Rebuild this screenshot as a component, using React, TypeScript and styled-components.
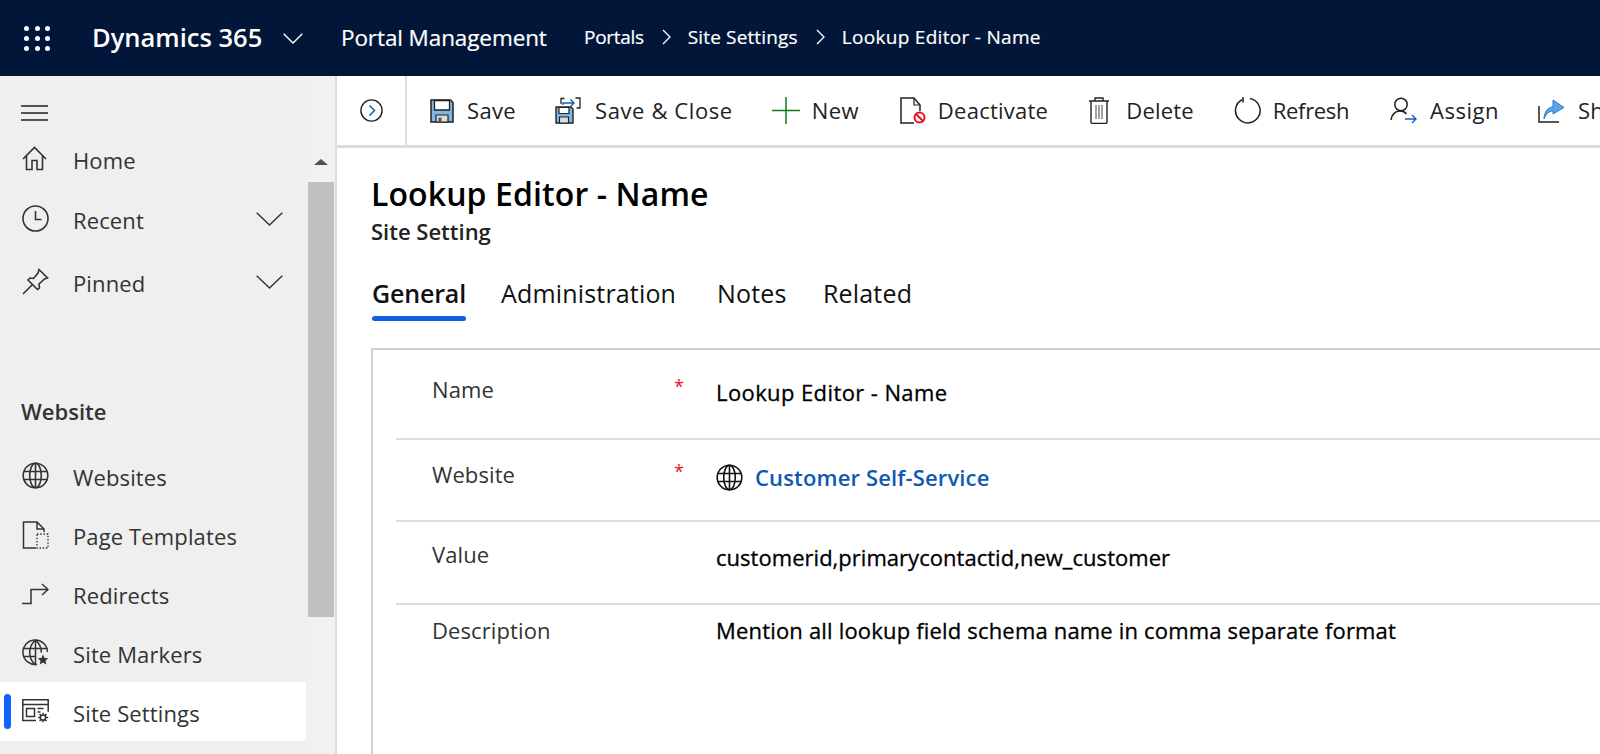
import React from "react";
import styled, { createGlobalStyle } from "styled-components";

const Global = createGlobalStyle`
  html, body { margin: 0; padding: 0; height: 100%; overflow: hidden; background: #fff; }
  body { font-family: "Open Sans", "Noto Sans", "Liberation Sans", sans-serif; color: #111; }
  * { box-sizing: border-box; }
`;

const Page = styled.div`
  width: 1600px;
  height: 754px;
  display: flex;
  flex-direction: column;
  overflow: hidden;
`;

const TopBar = styled.header`
  flex: 0 0 76px;
  background: #011638;
  color: #fff;
  display: flex;
  align-items: center;
  padding-left: 24px;
  white-space: nowrap;
`;
const Waffle = styled.div`
  width: 26px;
  height: 25px;
  display: grid;
  grid-template-columns: repeat(3, 5px);
  grid-template-rows: repeat(3, 5px);
  justify-content: space-between;
  align-content: space-between;
  margin-right: 42px;
`;
const Dot = styled.span`
  width: 5px;
  height: 5px;
  border-radius: 50%;
  background: #fff;
`;
const Brand = styled.span`
  font-size: 25.5px;
  font-weight: 600;
  width: 191px;
  margin-top: -2px;
`;
const App_ = styled.span`
  font-size: 22.5px;
  letter-spacing: -0.1px;
  -webkit-text-stroke: 0.2px #fff;
  width: 243px;
  margin-left: 38px;
  margin-top: -2px;
`;
const Crumb = styled.span<{ $ls?: number }>`
  font-size: 19px;
  letter-spacing: ${(p) => p.$ls ?? 0.15}px;
  -webkit-text-stroke: 0.2px #fff;
  margin-top: -3px;
`;
const CrumbSep = styled.span`
  display: inline-flex;
  width: 44px;
  justify-content: flex-start;
  padding-left: 18px;
  margin-top: -3px;
`;

const Body = styled.div`
  flex: 1;
  display: flex;
  min-height: 0;
`;
const Side = styled.aside`
  flex: 0 0 337px;
  background: #f0f0f0;
  border-right: 2px solid #dcdcdc;
  display: flex;
`;
const Nav = styled.nav`
  flex: 0 0 306px;
  background: #efefef;
  display: flex;
  flex-direction: column;
`;
const Hamburger = styled.div`
  flex: 0 0 53px;
  padding: 28px 0 0 21px;
`;
const NavRow = styled.div<{ $h?: number; $active?: boolean }>`
  position: relative;
  flex: 0 0 ${(p) => p.$h ?? 59}px;
  display: flex;
  align-items: center;
  background: ${(p) => (p.$active ? "#fff" : "transparent")};
  color: #333;
`;
const NavIcon = styled.span`
  flex: 0 0 73px;
  display: flex;
  padding-left: 22px;
`;
const NavLabel = styled.span`
  flex: 1;
  font-size: 22px;
  letter-spacing: 0.13px;
  padding-top: 3px;
`;
const NavChevron = styled.span`
  flex: 0 0 50px;
  display: flex;
  padding-top: 2px;
`;
const Marker = styled.span`
  position: absolute;
  left: 4px;
  top: 12px;
  width: 7px;
  height: 35px;
  border-radius: 4px;
  background: #0f62fe;
`;
const GroupTitle = styled.div`
  flex: 0 0 132px;
  display: flex;
  align-items: flex-end;
  padding: 0 0 20px 21px;
  font-size: 22px;
  font-weight: 600;
  color: #333;
`;
const Scroll = styled.div`
  flex: 0 0 26px;
  margin-left: 2px;
  display: flex;
  flex-direction: column;
  background: #f1f1f1;
  padding-top: 70px;
`;
const ScrollUp = styled.div`
  flex: 0 0 36px;
  display: flex;
  align-items: center;
  justify-content: center;
  padding-bottom: 4px;
`;
const Caret = styled.span`
  width: 0;
  height: 0;
  border-left: 7px solid transparent;
  border-right: 7px solid transparent;
  border-bottom: 6px solid #505050;
`;
const Thumb = styled.div`
  flex: 0 0 435px;
  background: #c1c1c1;
`;

const Main = styled.main`
  flex: 1;
  min-width: 0;
  display: flex;
  flex-direction: column;
  overflow: hidden;
`;
const Toolbar = styled.div`
  flex: 0 0 72px;
  display: flex;
  border-bottom: 3px solid #dcdcdc;
  white-space: nowrap;
  overflow: hidden;
`;
const Toggle = styled.div`
  flex: 0 0 70px;
  display: flex;
  align-items: center;
  justify-content: center;
  border-right: 2px solid #dcdcdc;
`;
const Commands = styled.div`
  display: flex;
  align-items: center;
  gap: 40px;
  padding-left: 23px;
`;
const Command = styled.div<{ $gap: number; $ml: number }>`
  display: flex;
  align-items: center;
  gap: ${(p) => p.$gap}px;
  margin-left: ${(p) => p.$ml}px;
  flex: none;
`;
const CommandLabel = styled.span<{ $ls: number }>`
  font-size: 22px;
  letter-spacing: ${(p) => p.$ls}px;
  color: #222;
  margin-top: -1px;
`;

const Head = styled.div`
  padding: 25px 0 0 34px;
`;
const Title = styled.h1`
  margin: 0 0 1px;
  font-size: 32px;
  line-height: 42px;
  font-weight: 600;
  letter-spacing: 0.1px;
  color: #000;
`;
const Sub = styled.div`
  font-size: 22px;
  line-height: 30px;
  font-weight: 600;
  color: #222;
`;
const Tabs = styled.div`
  display: flex;
  margin: 29px 0 0 1px;
  height: 73px;
`;
const Tab = styled.div<{ $w: number; $active?: boolean }>`
  flex: 0 0 ${(p) => p.$w}px;
  font-size: 25px;
  line-height: 36px;
  font-weight: ${(p) => (p.$active ? 600 : 400)};
  letter-spacing: ${(p) => (p.$active ? "-0.15px" : "0.17px")};
  color: #111;
  position: relative;
`;
const TabBar = styled.span`
  position: absolute;
  left: 0;
  top: 41px;
  width: 94px;
  height: 5px;
  border-radius: 3px;
  background: #1160e0;
`;
const Card = styled.section`
  margin: 0 0 0 34px;
  flex: 1;
  border: 2px solid #cfcfcf;
  border-right: 0;
  border-bottom: 0;
  padding-left: 23px;
`;
const FieldRow = styled.div<{ $h: number; $top: number; $last?: boolean }>`
  height: ${(p) => p.$h}px;
  padding: ${(p) => p.$top}px 0 0 36px;
  display: grid;
  grid-template-columns: 244px 40px 1fr;
  align-items: start;
  border-bottom: ${(p) => (p.$last ? "0" : "2px solid #dcdcdc")};
`;
const FieldLabel = styled.div`
  font-size: 22px;
  line-height: 30px;
  letter-spacing: 0.1px;
  color: #333;
`;
const Star = styled.div`
  font-size: 18px;
  line-height: 24px;
  margin-left: -2px;
  color: #e81123;
`;
const FieldValue = styled.div<{ $off: number; $ls: number }>`
  margin-top: ${(p) => p.$off}px;
  font-size: 22px;
  line-height: 30px;
  letter-spacing: ${(p) => p.$ls}px;
  -webkit-text-stroke: 0.3px #000;
  color: #000;
  white-space: nowrap;
  display: flex;
  align-items: center;
`;
const LookupLink = styled.span`
  margin-left: 12px;
  font-weight: 600;
  letter-spacing: 0.15px;
  -webkit-text-stroke: 0;
  color: #1158b0;
`;

const Chevron = ({ w, h, c }: { w: number; h: number; c: string }) => (
  <svg width={w} height={h} viewBox={`0 0 ${w} ${h}`} fill="none" stroke={c} strokeWidth="1.4">
    <path d={`M0.7 0.7 L${w / 2} ${h - 1} L${w - 0.7} 0.7`} />
  </svg>
);
const Sep = () => (
  <svg width="9" height="16" viewBox="0 0 9 16" fill="none" stroke="#fff" strokeWidth="1.3">
    <path d="M1 1l7 7-7 7" />
  </svg>
);

const S = { fill: "none", stroke: "#333", strokeWidth: 1.6 };

const HomeIcon = () => (
  <svg width="25" height="25" viewBox="0 0 25 25" {...S}>
    <path d="M1 13 12.500 1.500 24 13M4.500 10v13.500h5.500v-9h5v9h5.500V10" />
  </svg>
);
const ClockIcon = () => (
  <svg width="27" height="27" viewBox="0 0 27 27" {...S}>
    <circle cx="13.5" cy="13.5" r="12.5" />
    <path d="M13.5 6v8.500h6" />
  </svg>
);
const PinIcon = () => (
  <svg width="27" height="27" viewBox="0 0 27 27" {...S}>
    <path d="M17 1.500 25.500 10l-3 1-5.500 5 .5 4-2 1.500L6 12l2-2 3.500.5L16 5z" />
    <path d="M10.500 16.500 1 26" />
  </svg>
);
const GlobeIcon = ({ c = "#333", size = 27 }: { c?: string; size?: number }) => (
  <svg width={size} height={size} viewBox="0 0 27 27" fill="none" stroke={c} strokeWidth="1.6">
    <circle cx="13.5" cy="13.5" r="12.3" />
    <ellipse cx="13.5" cy="13.5" rx="5.8" ry="12.3" />
    <path d="M13.5 1.200v24.600M1.600 9.500h23.800M1.600 17.500h23.800" />
  </svg>
);
const TemplateIcon = () => (
  <svg width="27" height="28" viewBox="0 0 27 28" fill="none" stroke="#333" strokeWidth="1.5">
    <path d="M14 27H1.500V1H15l7 7v3" />
    <path d="M15 1v7h7" />
    <path d="M15 13h11v14H15z" strokeDasharray="1.5 1.7" strokeWidth="1.3" />
  </svg>
);
const RedirectIcon = () => (
  <svg width="27" height="22" viewBox="0 0 27 22" fill="none" stroke="#333" strokeWidth="1.5">
    <path d="M0 20.500h9V6.500h16.500M20 1l6 5.500-6 5.500" />
  </svg>
);
const MarkerIcon = () => (
  <svg width="27" height="27" viewBox="0 0 27 27" fill="none" stroke="#333" strokeWidth="1.5">
    <path d="M15 25.400A12.300 12.300 0 1 1 25.500 13" />
    <path d="M13.500 1.200C10 4 7.700 8.500 7.700 13.500s2.300 9.500 5.800 12.300M13.500 1.200c3.500 2.800 5.800 7.300 5.800 12.300M13.500 1.200v24M1.600 9.500h23.800M1.600 17.500h12" />
    <path d="M21 15.500l1.600 3.400 3.700.4-2.800 2.500.8 3.700-3.300-1.900-3.300 1.900.8-3.700-2.800-2.500 3.700-.4z" fill="#333" stroke="none" />
  </svg>
);
const SettingsIcon = () => (
  <svg width="27" height="25" viewBox="0 0 27 25" fill="none" stroke="#333" strokeWidth="1.5">
    <path d="M14 21.500H.8V.8h25.400v12" />
    <path d="M.8 5.500h25.400" />
    <path d="M4.500 9.500h8v8h-8zM15.500 9.500h6M15.500 13h3" />
    <circle cx="21" cy="18.5" r="2.6" />
    <path d="M21 13.800v2M21 21v2.200M16.200 18.500h2.200M23.600 18.500h2.600M17.600 15.100l1.600 1.600M22.900 20.400l1.600 1.600M17.600 21.900l1.600-1.600M22.900 16.600l1.600-1.600" />
  </svg>
);

const ToggleIcon = () => (
  <svg width="23" height="23" viewBox="0 0 23 23" fill="none">
    <circle cx="11.5" cy="11.5" r="10.6" stroke="#222" strokeWidth="1.4" />
    <path d="M9.500 6.500l5 5-5 5" stroke="#1160b7" strokeWidth="1.5" />
  </svg>
);
const SaveIcon = () => (
  <svg width="24" height="24" viewBox="0 0 24 24" fill="none">
    <path d="M1 1h19.500L23 3.500V23H1z" fill="#7db7e8" stroke="#222" strokeWidth="1.5" />
    <path d="M4.500 1.500h15v9.500h-15z" fill="#fff" stroke="#222" strokeWidth="1.3" />
    <path d="M6 16h12v7H6z" fill="#dcdcdc" stroke="#222" strokeWidth="1.2" />
    <path d="M8.500 18.500h3v4.500h-3z" fill="#555" />
  </svg>
);
const SaveCloseIcon = () => (
  <svg width="26" height="27" viewBox="0 0 26 27" fill="none">
    <path d="M1 10h15l2 2v14H1z" fill="#7db7e8" stroke="#222" strokeWidth="1.4" />
    <path d="M4 10.500h10v6H4z" fill="#fff" stroke="#222" strokeWidth="1.2" />
    <path d="M4.500 20h9v6h-9z" fill="#dcdcdc" stroke="#222" strokeWidth="1.1" />
    <path d="M6 7V1.500h3.500M20.500 1H25v10h-3.500" stroke="#222" strokeWidth="1.3" />
    <path d="M8 8V6h11M15.500 2.500 19 6l-3.500 3.500" stroke="#1160b7" strokeWidth="1.4" />
  </svg>
);
const PlusIcon = () => (
  <svg width="28" height="27" viewBox="0 0 28 27" fill="none" stroke="#107c10" strokeWidth="1.5">
    <path d="M0 13.500h28M14 0v27" />
  </svg>
);
const DeactivateIcon = () => (
  <svg width="26" height="27" viewBox="0 0 26 27" fill="none">
    <path d="M14 26H1V1h13l6 7v6" stroke="#222" strokeWidth="1.5" />
    <path d="M14 1v7h6" stroke="#222" strokeWidth="1.2" />
    <circle cx="19.5" cy="20.5" r="5" stroke="#e81123" strokeWidth="2" />
    <path d="M16 17l7 7" stroke="#e81123" strokeWidth="2" />
  </svg>
);
const DeleteIcon = () => (
  <svg width="22" height="27" viewBox="0 0 22 27" fill="none" stroke="#222" strokeWidth="1.4">
    <path d="M1 4h20M7 4V1h8v3M3 4v21a1.500 1.500 0 0 0 1.500 1.500h13A1.500 1.500 0 0 0 19 25V4" />
    <path d="M8 8v14M11 8v14M14 8v14" strokeWidth="1.1" stroke="#555" />
  </svg>
);
const RefreshIcon = () => (
  <svg width="28" height="27" viewBox="0 0 28 27" fill="none" stroke="#222" strokeWidth="1.5">
    <path d="M17 1.500A12.300 12.300 0 1 1 9.500 2.500" />
    <path d="M10 0v5.500" />
  </svg>
);
const AssignIcon = () => (
  <svg width="27" height="27" viewBox="0 0 27 27" fill="none">
    <circle cx="11" cy="7.500" r="6.200" stroke="#222" strokeWidth="1.5" />
    <path d="M1 23c.5-5 4-9 9-9 3 0 5 1 6.500 3" stroke="#222" strokeWidth="1.5" />
    <path d="M15 22h11M22 18l4 4-4 4" stroke="#1160b7" strokeWidth="1.4" />
  </svg>
);
const ShareIcon = () => (
  <svg width="27" height="24" viewBox="0 0 27 24" fill="none">
    <path d="M1 7v16h20" stroke="#222" strokeWidth="1.5" />
    <path d="M6 20C6 13 10 8 15 8V1l11 7.500L15 15v-3c-4 0-7 3-9 8z" fill="#5aa5e6" stroke="#2b7cc0" strokeWidth="1" />
  </svg>
);

const commands = [
  { label: "Save", icon: <SaveIcon />, gap: 13, ls: 0.35, ml: 0 },
  { label: "Save & Close", icon: <SaveCloseIcon />, gap: 14, ls: 0.6, ml: -1 },
  { label: "New", icon: <PlusIcon />, gap: 12, ls: 0.35, ml: -1 },
  { label: "Deactivate", icon: <DeactivateIcon />, gap: 12, ls: 0.25, ml: 1 },
  { label: "Delete", icon: <DeleteIcon />, gap: 16, ls: 0.2, ml: 0 },
  { label: "Refresh", icon: <RefreshIcon />, gap: 12, ls: -0.35, ml: -1 },
  { label: "Assign", icon: <AssignIcon />, gap: 13, ls: 0.5, ml: 1 },
  { label: "Share", icon: <ShareIcon />, gap: 13, ls: 0.35, ml: -1 },
];

const tabs = [
  { label: "General", w: 129, active: true },
  { label: "Administration", w: 216 },
  { label: "Notes", w: 106 },
  { label: "Related", w: 100 },
];

const websiteItems = [
  { label: "Websites", icon: <GlobeIcon /> },
  { label: "Page Templates", icon: <TemplateIcon /> },
  { label: "Redirects", icon: <RedirectIcon /> },
  { label: "Site Markers", icon: <MarkerIcon /> },
  { label: "Site Settings", icon: <SettingsIcon />, active: true },
];

export default function App() {
  return (
    <Page>
      <Global />
      <TopBar>
        <Waffle>
          {Array.from({ length: 9 }).map((_, i) => (
            <Dot key={i} />
          ))}
        </Waffle>
        <Brand>Dynamics 365</Brand>
        <Chevron w={20} h={11} c="#fff" />
        <App_>Portal Management</App_>
        <Crumb $ls={-0.3}>Portals</Crumb>
        <CrumbSep>
          <Sep />
        </CrumbSep>
        <Crumb>Site Settings</Crumb>
        <CrumbSep>
          <Sep />
        </CrumbSep>
        <Crumb $ls={0.3}>Lookup Editor - Name</Crumb>
      </TopBar>
      <Body>
        <Side>
          <Nav>
            <Hamburger>
              <svg width="27" height="16" viewBox="0 0 27 16" stroke="#222" strokeWidth="1.4">
                <path d="M0 1h27M0 8h27M0 15h27" />
              </svg>
            </Hamburger>
            <NavRow>
              <NavIcon>
                <HomeIcon />
              </NavIcon>
              <NavLabel>Home</NavLabel>
            </NavRow>
            <NavRow $h={60}>
              <NavIcon>
                <ClockIcon />
              </NavIcon>
              <NavLabel>Recent</NavLabel>
              <NavChevron>
                <Chevron w={27} h={14} c="#333" />
              </NavChevron>
            </NavRow>
            <NavRow $h={66}>
              <NavIcon>
                <PinIcon />
              </NavIcon>
              <NavLabel>Pinned</NavLabel>
              <NavChevron>
                <Chevron w={27} h={14} c="#333" />
              </NavChevron>
            </NavRow>
            <GroupTitle>Website</GroupTitle>
            {websiteItems.map((it) => (
              <NavRow key={it.label} $active={it.active}>
                {it.active && <Marker />}
                <NavIcon>{it.icon}</NavIcon>
                <NavLabel>{it.label}</NavLabel>
              </NavRow>
            ))}
          </Nav>
          <Scroll>
            <ScrollUp>
              <Caret />
            </ScrollUp>
            <Thumb />
          </Scroll>
        </Side>
        <Main>
          <Toolbar>
            <Toggle>
              <ToggleIcon />
            </Toggle>
            <Commands>
              {commands.map((c) => (
                <Command key={c.label} $gap={c.gap} $ml={c.ml}>
                  {c.icon}
                  <CommandLabel $ls={c.ls}>{c.label}</CommandLabel>
                </Command>
              ))}
            </Commands>
          </Toolbar>
          <Head>
            <Title>Lookup Editor - Name</Title>
            <Sub>Site Setting</Sub>
            <Tabs>
              {tabs.map((t) => (
                <Tab key={t.label} $w={t.w} $active={t.active}>
                  {t.label}
                  {t.active && <TabBar />}
                </Tab>
              ))}
            </Tabs>
          </Head>
          <Card>
            <FieldRow $h={90} $top={24}>
              <FieldLabel>Name</FieldLabel>
              <Star>*</Star>
              <FieldValue $off={3} $ls={0.4}>Lookup Editor - Name</FieldValue>
            </FieldRow>
            <FieldRow $h={82} $top={19}>
              <FieldLabel>Website</FieldLabel>
              <Star>*</Star>
              <FieldValue $off={3} $ls={0.15}>
                <GlobeIcon c="#111" />
                <LookupLink>Customer Self-Service</LookupLink>
              </FieldValue>
            </FieldRow>
            <FieldRow $h={83} $top={17}>
              <FieldLabel>Value</FieldLabel>
              <span />
              <FieldValue $off={3} $ls={0.03}>customerid,primarycontactid,new_customer</FieldValue>
            </FieldRow>
            <FieldRow $h={140} $top={10} $last>
              <FieldLabel>Description</FieldLabel>
              <span />
              <FieldValue $off={0} $ls={0.18}>Mention all lookup field schema name in comma separate format</FieldValue>
            </FieldRow>
          </Card>
        </Main>
      </Body>
    </Page>
  );
}
